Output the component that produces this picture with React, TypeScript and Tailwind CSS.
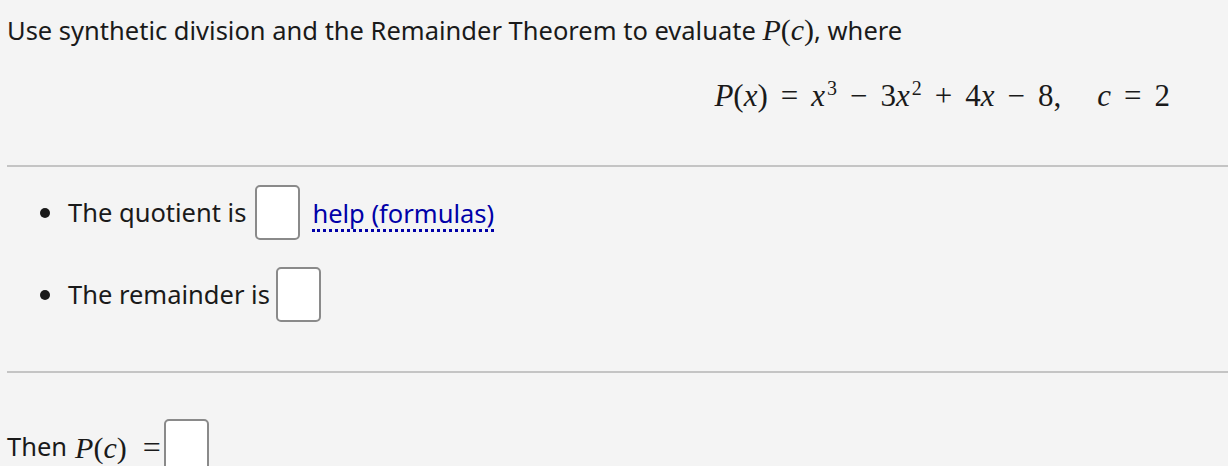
import React from 'react';

const mathFont = { fontFamily: '"Liberation Serif", "DejaVu Serif", serif' };

const AnswerBox: React.FC<{ className?: string }> = ({ className = '' }) => (
  <span
    className={`inline-block w-[45px] h-[55px] bg-white border-2 border-[#8a8a8a] rounded-[5px] align-middle ${className}`}
  />
);

const I: React.FC<{ children: React.ReactNode }> = ({ children }) => <i className="italic">{children}</i>;
const Op: React.FC<{ children: React.ReactNode }> = ({ children }) => <span className="mx-[13px]">{children}</span>;
const Sup: React.FC<{ children: React.ReactNode }> = ({ children }) => (
  <sup className="text-[20px] -top-[11px] ml-[2px]">{children}</sup>
);

const App: React.FC = () => {
  return (
    <div
      className="w-[1228px] h-[466px] overflow-hidden bg-[#f4f4f4] text-[#1a1a1a] text-[25.5px]"
      style={{ fontFamily: '"Noto Sans", "Open Sans", sans-serif' }}
    >
      <div className="pl-[7px] pt-[12px]">
        <p className="leading-[36px]">
          Use synthetic division and the Remainder Theorem to evaluate{' '}
          <span className="text-[30px]" style={mathFont}>
            <I>P</I>(<I>c</I>)
          </span>
          , where
        </p>
        <div className="flex justify-end pr-[58px] pt-[28px] pb-[49px] text-[31px] leading-[40px]" style={mathFont}>
          <span className="whitespace-nowrap">
            <I>P</I>(<I>x</I>)<Op>=</Op>
            <I>x</I>
            <Sup>3</Sup>
            <Op>−</Op>3<I>x</I>
            <Sup>2</Sup>
            <Op>+</Op>4<I>x</I>
            <Op>−</Op>8,
            <span className="inline-block w-[36px]" />
            <I>c</I>
            <Op>=</Op>2
          </span>
        </div>
      </div>

      <div className="ml-[7px] border-t-2 border-[#c4c4c4]" />

      <ul className="pl-[40px] pt-[18px] pb-[49px] flex flex-col gap-[27px]">
        <li className="flex items-center">
          <span className="w-[10px] h-[10px] rounded-full bg-[#1a1a1a] mr-[18px]" />
          <span>The quotient is</span>
          <AnswerBox className="ml-[9px]" />
          <a className="ml-[12px] mt-[4px] text-[#0000a8] border-b-[3px] border-dotted border-[#0000a8] leading-[32px] cursor-help">
            help (formulas)
          </a>
        </li>
        <li className="flex items-center">
          <span className="w-[10px] h-[10px] rounded-full bg-[#1a1a1a] mr-[18px]" />
          <span>The remainder is</span>
          <AnswerBox className="ml-[6px]" />
        </li>
      </ul>

      <div className="ml-[7px] border-t-2 border-[#c4c4c4]" />

      <div className="pl-[7px] pt-[46px] flex items-center">
        <span>Then</span>
        <span className="ml-[8px] text-[30px] whitespace-nowrap" style={mathFont}>
          <I>P</I>(<I>c</I>)<span className="ml-[16px] mr-[3px] text-[32px]">=</span>
        </span>
        <AnswerBox />
      </div>
    </div>
  );
};

export default App;
